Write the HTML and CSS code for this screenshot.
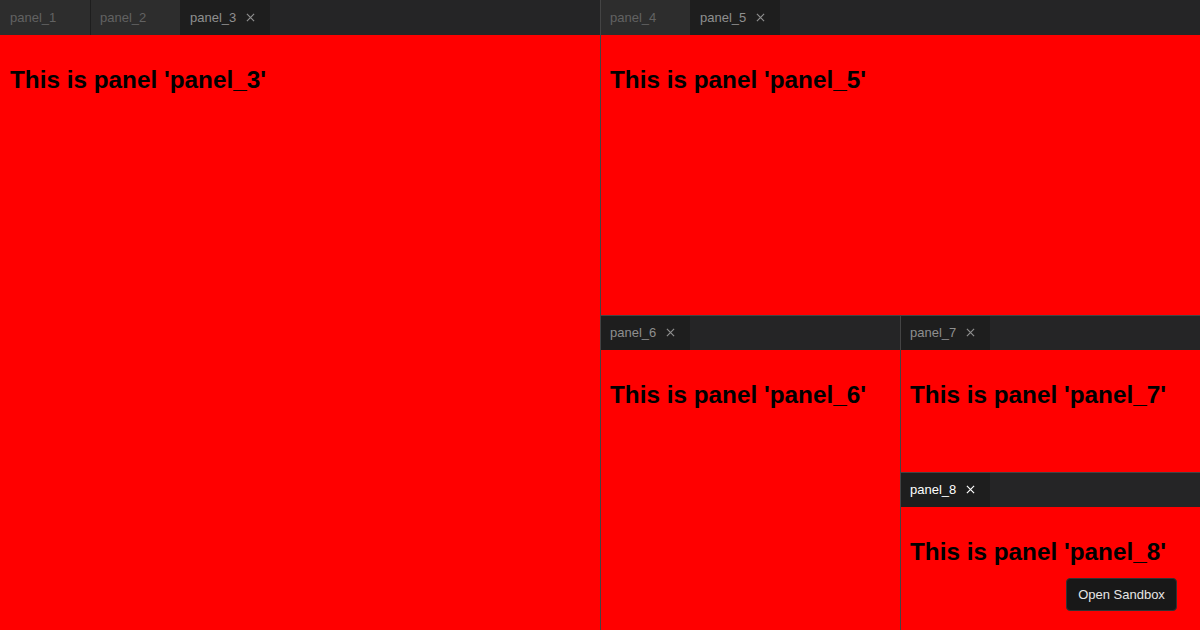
FILE: index.html
```html
<!DOCTYPE html>
<html>
<head>
<meta charset="utf-8">
<link rel="stylesheet" href="styles.css">
</head>
<body>
<div class="dock">
  <div class="group g-left">
    <div class="tabs">
      <div class="tab hidden"><span class="label">panel_1</span><span class="close"><svg viewBox="0 0 10 10"><path d="M1 1L9 9M9 1L1 9"/></svg></span></div>
      <div class="tab hidden"><span class="label">panel_2</span><span class="close"><svg viewBox="0 0 10 10"><path d="M1 1L9 9M9 1L1 9"/></svg></span></div>
      <div class="tab visible"><span class="label">panel_3</span><span class="close"><svg viewBox="0 0 10 10"><path d="M1 1L9 9M9 1L1 9"/></svg></span></div>
    </div>
    <div class="content"><h2>This is panel 'panel_3'</h2></div>
  </div>
  <div class="col">
    <div class="group g-top sep-left">
      <div class="tabs">
        <div class="tab hidden"><span class="label">panel_4</span><span class="close"><svg viewBox="0 0 10 10"><path d="M1 1L9 9M9 1L1 9"/></svg></span></div>
        <div class="tab visible"><span class="label">panel_5</span><span class="close"><svg viewBox="0 0 10 10"><path d="M1 1L9 9M9 1L1 9"/></svg></span></div>
      </div>
      <div class="content"><h2>This is panel 'panel_5'</h2></div>
    </div>
    <div class="row">
      <div class="group g-six sep-left sep-top">
        <div class="tabs">
          <div class="tab visible"><span class="label">panel_6</span><span class="close"><svg viewBox="0 0 10 10"><path d="M1 1L9 9M9 1L1 9"/></svg></span></div>
        </div>
        <div class="content"><h2>This is panel 'panel_6'</h2></div>
      </div>
      <div class="col">
        <div class="group g-seven sep-left sep-top">
          <div class="tabs">
            <div class="tab visible"><span class="label">panel_7</span><span class="close"><svg viewBox="0 0 10 10"><path d="M1 1L9 9M9 1L1 9"/></svg></span></div>
          </div>
          <div class="content"><h2>This is panel 'panel_7'</h2></div>
        </div>
        <div class="group g-eight active sep-left sep-top">
          <div class="tabs">
            <div class="tab visible"><span class="label">panel_8</span><span class="close"><svg viewBox="0 0 10 10"><path d="M1 1L9 9M9 1L1 9"/></svg></span></div>
          </div>
          <div class="content"><h2>This is panel 'panel_8'</h2></div>
        </div>
      </div>
    </div>
  </div>
</div>
<button class="sandbox">Open Sandbox</button>
</body>
</html>
```
FILE: styles.css
```css
html, body {
  margin: 0;
  padding: 0;
  width: 1200px;
  height: 630px;
  overflow: hidden;
  font-family: "Liberation Sans", Arial, sans-serif;
  background: #ff0000;
}
.dock {
  display: flex;
  width: 1200px;
  height: 630px;
}
.group {
  position: relative;
  display: flex;
  flex-direction: column;
  background: #ff0000;
  overflow: hidden;
}
.sep-left::before {
  content: "";
  position: absolute;
  left: 0;
  top: 0;
  bottom: 0;
  width: 1px;
  background: #444444;
  z-index: 2;
}
.sep-top::after {
  content: "";
  position: absolute;
  left: 0;
  right: 0;
  top: 0;
  height: 1px;
  background: #444444;
  z-index: 2;
}
.g-left { width: 600px; flex: none; }
.col {
  flex: 1;
  display: flex;
  flex-direction: column;
  min-width: 0;
}
.row {
  flex: 1;
  display: flex;
  min-height: 0;
}
.g-top { height: 315px; flex: none; }
.g-six { width: 300px; flex: none; }
.g-seven { height: 157px; flex: none; }
.g-eight { flex: 1; }
.tabs {
  height: 35px;
  flex: none;
  display: flex;
  background: #252526;
}
.tab {
  display: flex;
  align-items: center;
  box-sizing: border-box;
  width: 90px;
  padding: 0 12px 0 10px;
  font-size: 13px;
  white-space: nowrap;
}
.tab.hidden + .tab.hidden { box-shadow: inset 1px 0 0 #1e1e1e; }
.tab.hidden { background: #2d2d2d; color: #626262; }
.tab.visible { background: #1e1e1e; color: #8f8f8f; }
.active .tab.visible { color: #ffffff; }
.label { flex: 1; }
.close {
  width: 16px;
  height: 16px;
  display: flex;
  align-items: center;
  justify-content: center;
}
.tab.hidden .close { visibility: hidden; }
.close svg {
  width: 9px;
  height: 9px;
  stroke: currentColor;
  stroke-width: 1.3;
  fill: none;
}
.content {
  flex: 1;
  padding: 10px;
  color: #000;
}
.content h2 {
  margin: 21px 0 20px;
  font-size: 24.3px;
  font-weight: bold;
  white-space: nowrap;
}
.sandbox {
  position: fixed;
  right: 23px;
  bottom: 19px;
  width: 111px;
  height: 33px;
  background: #181818;
  color: #e6e6e6;
  border: 1px solid #333333;
  border-radius: 4px;
  font-family: "Liberation Sans", Arial, sans-serif;
  font-size: 13px;
  padding: 0;
}
```
